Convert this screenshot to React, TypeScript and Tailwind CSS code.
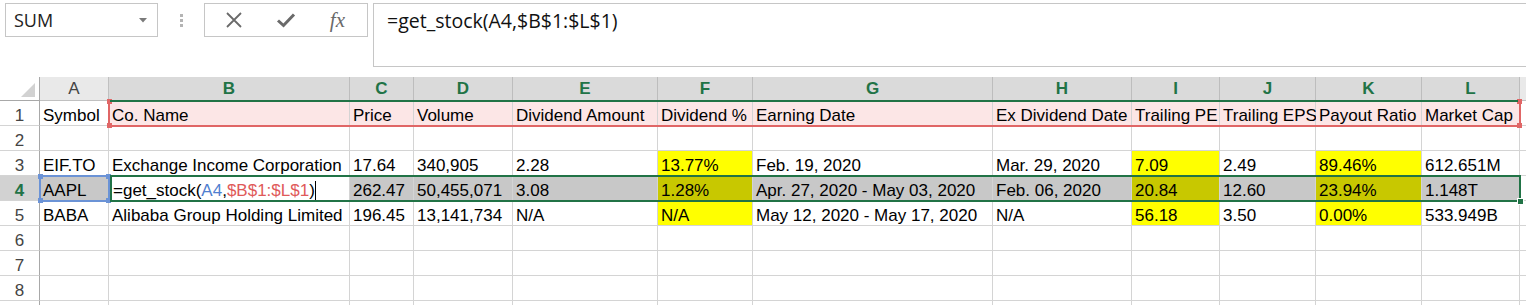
import React from "react";

const HEADERS = ["A", "B", "C", "D", "E", "F", "G", "H", "I", "J", "K", "L"];

const ROWS: string[][] = [
  ["Symbol", "Co. Name", "Price", "Volume", "Dividend Amount", "Dividend %", "Earning Date", "Ex Dividend Date", "Trailing PE", "Trailing EPS", "Payout Ratio", "Market Cap"],
  [],
  ["EIF.TO", "Exchange Income Corporation", "17.64", "340,905", "2.28", "13.77%", "Feb. 19, 2020", "Mar. 29, 2020", "7.09", "2.49", "89.46%", "612.651M"],
  ["AAPL", "", "262.47", "50,455,071", "3.08", "1.28%", "Apr. 27, 2020 - May 03, 2020", "Feb. 06, 2020", "20.84", "12.60", "23.94%", "1.148T"],
  ["BABA", "Alibaba Group Holding Limited", "196.45", "13,141,734", "N/A", "N/A", "May 12, 2020 - May 17, 2020", "N/A", "56.18", "3.50", "0.00%", "533.949B"],
  [],
  [],
  [],
  [],
];

// columns F, I, K are highlighted yellow for the data rows
const YELLOW = [5, 8, 10];

function cellBg(row: number, col: number) {
  if (row === 1 && col >= 1) return "bg-[#fce6e6]";
  if (row === 4 && col === 1) return "bg-white";
  const yellow = row >= 3 && row <= 5 && YELLOW.includes(col);
  if (row === 4) return yellow ? "bg-[#c8c800]" : "bg-[#c8c8c8]";
  if (yellow) return "bg-[#ffff00]";
  return "bg-white";
}

// coloured range outline with the little square handles on its corners
function RangeBox({ className, color }: { className: string; color: string }) {
  const dot = "absolute w-[5px] h-[5px] " + color;
  return (
    <div className={"absolute " + className}>
      <div className={dot + " -left-[3px] -top-[3px]"} />
      <div className={dot + " -right-[3px] -top-[3px]"} />
      <div className={dot + " -left-[3px] -bottom-[3px]"} />
      <div className={dot + " -right-[3px] -bottom-[3px]"} />
    </div>
  );
}

export default function App() {
  return (
    <div className="w-[1526px] h-[305px] overflow-hidden bg-white text-black font-['Liberation_Sans',Arial,sans-serif]">
      {/* Formula bar */}
      <div className="flex items-start pt-[3px] h-[77px]">
        <div className="ml-[5px] w-[153px] h-[34px] border border-[#c6c6c6] flex items-center justify-between pl-[8px] pr-[10px] font-['Open_Sans',sans-serif] text-[18px] text-[#222]">
          <span>SUM</span>
          <svg width="8" height="5" viewBox="0 0 8 5">
            <path d="M0 0 L8 0 L4 4.5 Z" fill="#7a7a7a" />
          </svg>
        </div>
        <div className="w-[46px] h-[34px] flex flex-col items-center justify-center gap-[2px]">
          <div className="w-[3px] h-[3px] bg-[#b4b4b4]" />
          <div className="w-[3px] h-[3px] bg-[#b4b4b4]" />
          <div className="w-[3px] h-[3px] bg-[#b4b4b4]" />
        </div>
        <div className="w-[164px] h-[34px] border border-[#c6c6c6] flex items-center justify-between px-[20px]">
          <svg width="18" height="18" viewBox="0 0 18 18">
            <path d="M2 2 L16 16 M16 2 L2 16" stroke="#6a6a6a" strokeWidth="1.8" fill="none" />
          </svg>
          <svg width="20" height="16" viewBox="0 0 20 16">
            <path d="M2 8.5 L7.5 13.5 L18 2.5" stroke="#6a6a6a" strokeWidth="3" fill="none" strokeLinejoin="miter" />
          </svg>
          <span className="font-['Liberation_Serif',serif] italic text-[21px] text-[#6a6a6a] leading-none pr-[2px]">
            fx
          </span>
        </div>
        <div className="ml-[5px] flex-1 h-[64px] border border-r-0 border-[#c6c6c6] pl-[13px] pt-[4px] font-['Open_Sans',sans-serif] text-[19.5px] leading-[25px] text-[#111]">
          =get_stock(A4,$B$1:$L$1)
        </div>
      </div>

      {/* Sheet grid */}
      <div className="relative">
        <div className="grid grid-cols-[40px_69px_241px_64px_99px_145px_95px_240px_139px_88px_96px_106px_98px_1fr] grid-rows-[24px_repeat(9,25px)] text-[17px]">
          {/* corner */}
          <div className="flex items-end justify-end pr-[4px] pb-[3px] bg-white border-r border-b border-[#a8a8a8]">
            <svg width="14" height="14" viewBox="0 0 14 14">
              <path d="M14 0 L14 14 L0 14 Z" fill="#d2d2d2" />
            </svg>
          </div>
          {HEADERS.map((h, i) => (
            <div
              key={h}
              className={
                "flex items-center justify-center border-r border-b leading-[24px] " +
                (i === 0
                  ? "bg-[#e9e9e9] text-[#444] border-[#c0c0c0]"
                  : "bg-[#dadada] text-[#217346] font-bold border-[#bdbdbd]")
              }
            >
              {h}
            </div>
          ))}
          <div className="bg-[#e9e9e9] border-b border-[#c0c0c0]" />

          {ROWS.map((cells, r) => {
            const rowNum = r + 1;
            return (
              <React.Fragment key={rowNum}>
                <div
                  className={
                    "text-center pt-[5px] leading-[20px] border-r border-b border-r-[#a8a8a8] border-b-[#d4d4d4] " +
                    (rowNum === 4 ? "bg-[#d2d2d2] text-[#217346] font-bold" : "bg-white text-[#444]")
                  }
                >
                  {rowNum < 9 ? rowNum : ""}
                </div>
                {HEADERS.map((_, c) => (
                  <div
                    key={c}
                    className={
                      "pl-[3px] pt-[5px] leading-[20px] whitespace-nowrap border-r border-b border-[#d4d4d4] " +
                      cellBg(rowNum, c)
                    }
                  >
                    {rowNum === 4 && c === 1 ? (
                      <span className="pl-[1px]">
                        =get_stock(<span className="text-[#4f7fd0]">A4</span>,
                        <span className="text-[#e05a5a]">$B$1:$L$1</span>)
                        <span className="inline-block w-px h-[19px] bg-black align-[-4px]" />
                      </span>
                    ) : (
                      cells[c] ?? ""
                    )}
                  </div>
                ))}
                <div className="bg-white border-b border-[#d4d4d4]" />
              </React.Fragment>
            );
          })}
        </div>

        {/* Reference box B1:L1 */}
        <RangeBox className="left-[108px] top-[23px] w-[1413px] h-[27px] border-2 border-[#e06666]" color="bg-[#e06666]" />

        {/* selected column headers marker */}
        <div className="absolute left-[110px] top-[23px] w-[1408px] h-[2px] bg-[#217346]" />

        {/* Reference box A4 */}
        <RangeBox className="left-[39px] top-[98px] w-[71px] h-[27px] border-2 border-[#6b93d6]" color="bg-[#6b93d6]" />

        {/* Selection B4:L4 with fill handle */}
        <div className="absolute left-[110px] top-[98px] w-[1411px] h-[27px] border-2 border-[#217346]">
          <div className="absolute -right-[5px] -bottom-[5px] w-[7px] h-[7px] bg-[#217346] border border-white" />
        </div>
      </div>
    </div>
  );
}
